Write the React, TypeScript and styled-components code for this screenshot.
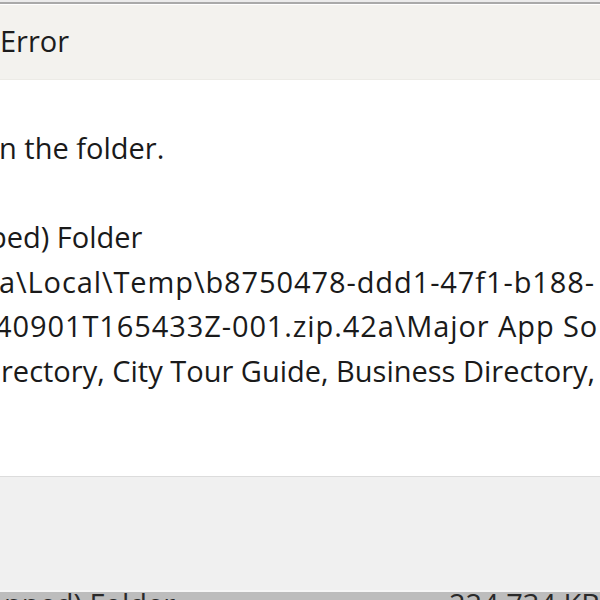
import React from "react";
import styled, { createGlobalStyle } from "styled-components";

const GlobalStyle = createGlobalStyle`
  html, body {
    margin: 0;
    padding: 0;
    background: #ffffff;
    overflow: hidden;
  }
  #root {
    width: 600px;
    height: 600px;
    overflow: hidden;
  }
`;

const Screen = styled.div`
  width: 600px;
  height: 600px;
  display: flex;
  flex-direction: column;
  overflow: hidden;
  font-family: "Open Sans", "Noto Sans", sans-serif;
  color: #1a1a1a;
`;

const Dialog = styled.div`
  display: flex;
  flex-direction: column;
  border-top: 2px solid #ebebeb;
  box-shadow: inset 0 2px 0 #a9a9a9;
`;

const TitleBar = styled.div`
  height: 75px;
  margin-top: 3px;
  padding-bottom: 3px;
  box-sizing: border-box;
  display: flex;
  align-items: center;
  background: #f3f2ee;
  border-bottom: 1px solid #ecebe6;
  font-size: 29px;
  color: #1c1c1c;
  white-space: nowrap;
`;

const Body = styled.div`
  height: 396px;
  padding-top: 46px;
  box-sizing: border-box;
  background: #ffffff;
  font-size: 29px;
  line-height: 44.5px;
  white-space: nowrap;
`;

const Line = styled.div<{ $shift?: number; $track?: number }>`
  margin-left: ${(p) => p.$shift ?? 0}px;
  letter-spacing: ${(p) => p.$track ?? 0}px;
  height: 44.5px;
`;

const Footer = styled.div`
  height: 113px;
  background: #f0f0f0;
  border-top: 1px solid #dcdcdc;
`;

const ListRow = styled.div`
  flex: 1;
  display: flex;
  justify-content: space-between;
  align-items: flex-start;
  background: #bdbdbd;
  border-top: 2px solid #f6f6f6;
  font-size: 29px;
  line-height: 12px;
  color: #2a2a2a;
  white-space: nowrap;
  overflow: hidden;
`;

const Cell = styled.span<{ $shift?: number }>`
  margin-left: ${(p) => p.$shift ?? 0}px;
  padding-top: 6px;
`;

export default function App() {
  return (
    <>
      <GlobalStyle />
      <Screen>
        <Dialog>
          <TitleBar>
            <span>Error</span>
          </TitleBar>
          <Body>
            <Line $shift={-1}>n the folder.</Line>
            <Line />
            <Line $shift={-11}>ped) Folder</Line>
            <Line $shift={-1} $track={0.9}>
              a\Local\Temp\b8750478-ddd1-47f1-b188-
            </Line>
            <Line $shift={-5} $track={0.9}>
              40901T165433Z-001.zip.42a\Major App So
            </Line>
            <Line $shift={1}>rectory, City Tour Guide, Business Directory,</Line>
          </Body>
          <Footer />
        </Dialog>
        <ListRow>
          <Cell $shift={4}>pped) Folder</Cell>
          <Cell>224,734 KB</Cell>
        </ListRow>
      </Screen>
    </>
  );
}
